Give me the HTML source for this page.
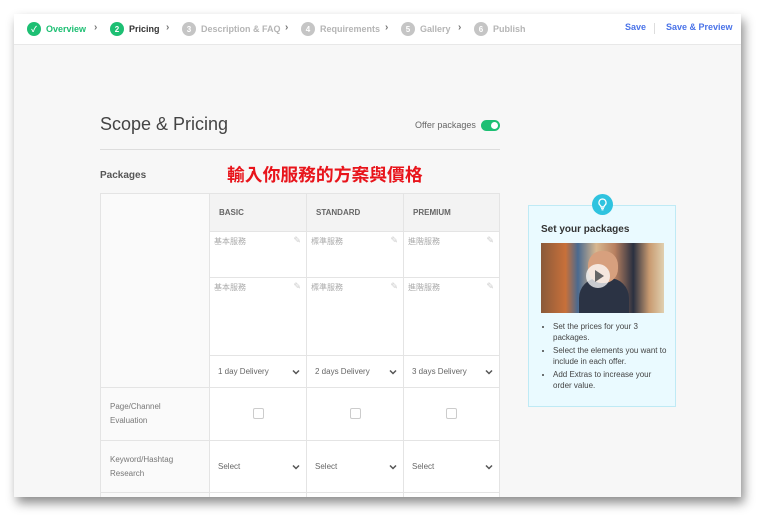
<!DOCTYPE html>
<html><head><meta charset="utf-8"><style>
*{box-sizing:border-box;margin:0;padding:0}
body{width:768px;height:525px;background:#fff;font-family:"Liberation Sans","Noto Sans CJK TC",sans-serif;position:relative;overflow:hidden}
.frame{position:absolute;left:14px;top:14px;width:727px;height:483px;background:#f7f7f7;box-shadow:3px 6px 10px rgba(0,0,0,.45);overflow:hidden}
.hdr{position:absolute;left:0;top:0;width:100%;height:31px;background:#fff;border-bottom:1px solid #e8e8e8;font-size:9px;font-weight:bold}
.st{position:absolute;top:8px;display:flex;align-items:center;color:#b5b5b5}
.c{width:14px;height:14px;border-radius:50%;background:#c5c5c5;color:#fff;font-size:8px;display:flex;align-items:center;justify-content:center;margin-right:5px}
.ar{position:absolute;top:8px;color:#777;font-size:10px}
.abs{position:absolute}
table{position:absolute;left:86px;top:179px;border-collapse:collapse;background:#fff}
td{border:1px solid #e4e4e4;vertical-align:top;font-size:8px;color:#888}
.lab{background:#fafafa;width:109px;color:#777;vertical-align:middle;padding-left:9px;line-height:14px}
.h{background:#f3f3f3;font-weight:bold;color:#666;vertical-align:middle;padding-left:9px}
.e{padding:4px;position:relative;color:#aaa;font-size:8px}
.e:after{content:"✎";position:absolute;right:5px;top:3px;color:#ccc;font-size:9px}
.sel{vertical-align:middle;padding:0 8px;color:#666;position:relative}
.sel svg{position:absolute;right:6px;top:calc(50% - 3px)}
.cb{vertical-align:middle;text-align:center}
.cb span{display:inline-block;width:11px;height:11px;border:1px solid #ccc;border-radius:2px}
</style></head><body>
<div class="frame">
<div class="hdr">
<div class="st" style="left:13px;color:#1dbf73"><div class="c" style="background:#1dbf73">✓</div>Overview</div>
<div class="ar" style="left:80px">›</div>
<div class="st" style="left:96px;color:#333"><div class="c" style="background:#1dbf73">2</div>Pricing</div>
<div class="ar" style="left:152px">›</div>
<div class="st" style="left:168px"><div class="c">3</div>Description &amp; FAQ</div>
<div class="ar" style="left:271px">›</div>
<div class="st" style="left:287px"><div class="c">4</div>Requirements</div>
<div class="ar" style="left:371px">›</div>
<div class="st" style="left:387px"><div class="c">5</div>Gallery</div>
<div class="ar" style="left:444px">›</div>
<div class="st" style="left:460px"><div class="c">6</div>Publish</div>
<div class="st" style="left:611px;color:#4a73e8">Save</div>
<div class="abs" style="left:640px;top:9px;width:1px;height:11px;background:#ddd"></div>
<div class="st" style="left:652px;color:#4a73e8">Save &amp; Preview</div>
</div>
<div class="abs" style="left:86px;top:100px;font-size:18px;color:#444">Scope &amp; Pricing</div>
<div class="abs" style="left:401px;top:106px;font-size:9px;color:#666">Offer packages</div>
<div class="abs" style="left:467px;top:106px;width:19px;height:11px;border-radius:6px;background:#1dbf73"><div style="position:absolute;right:2px;top:2px;width:7px;height:7px;border-radius:50%;background:#fff"></div></div>
<div class="abs" style="left:86px;top:135px;width:400px;height:1px;background:#ddd"></div>
<div class="abs" style="left:86px;top:156px;font-size:10px;font-weight:bold;color:#555">Packages</div>
<div class="abs" style="left:213px;top:147px;font-size:17.8px;font-weight:bold;color:#e8141b;white-space:nowrap">輸入你服務的方案與價格</div>
<table>
<tr style="height:38px"><td class="lab" rowspan="4"></td><td class="h" style="width:97px">BASIC</td><td class="h" style="width:97px">STANDARD</td><td class="h" style="width:96px">PREMIUM</td></tr>
<tr style="height:46px"><td class="e">基本服務</td><td class="e">標準服務</td><td class="e">進階服務</td></tr>
<tr style="height:78px"><td class="e">基本服務</td><td class="e">標準服務</td><td class="e">進階服務</td></tr>
<tr style="height:32px"><td class="sel">1 day Delivery<svg width="8" height="6" viewBox="0 0 8 6"><path d="M1 1.5L4 4.5L7 1.5" stroke="#555" stroke-width="1.5" fill="none"/></svg></td><td class="sel">2 days Delivery<svg width="8" height="6" viewBox="0 0 8 6"><path d="M1 1.5L4 4.5L7 1.5" stroke="#555" stroke-width="1.5" fill="none"/></svg></td><td class="sel">3 days Delivery<svg width="8" height="6" viewBox="0 0 8 6"><path d="M1 1.5L4 4.5L7 1.5" stroke="#555" stroke-width="1.5" fill="none"/></svg></td></tr>
<tr style="height:53px"><td class="lab">Page/Channel<br>Evaluation</td><td class="cb"><span></span></td><td class="cb"><span></span></td><td class="cb"><span></span></td></tr>
<tr style="height:52px"><td class="lab">Keyword/Hashtag<br>Research</td><td class="sel">Select<svg width="8" height="6" viewBox="0 0 8 6"><path d="M1 1.5L4 4.5L7 1.5" stroke="#555" stroke-width="1.5" fill="none"/></svg></td><td class="sel">Select<svg width="8" height="6" viewBox="0 0 8 6"><path d="M1 1.5L4 4.5L7 1.5" stroke="#555" stroke-width="1.5" fill="none"/></svg></td><td class="sel">Select<svg width="8" height="6" viewBox="0 0 8 6"><path d="M1 1.5L4 4.5L7 1.5" stroke="#555" stroke-width="1.5" fill="none"/></svg></td></tr>
<tr style="height:20px"><td class="lab"></td><td></td><td></td><td></td></tr>
</table>
<div class="abs" style="left:514px;top:191px;width:148px;height:202px;background:#eafaff;border:1px solid #bfeaf5">
<div style="position:absolute;left:12px;top:18px;font-size:10px;font-weight:bold;color:#333">Set your packages</div>
<div style="position:absolute;left:12px;top:37px;width:123px;height:70px;background:linear-gradient(90deg,#8a5a3a 0%,#c8703a 20%,#4a6a90 30%,#d8b890 45%,#b88060 60%,#2a3040 75%,#c89a70 88%,#e0d0b0 100%)">
<div style="position:absolute;left:38px;top:35px;width:50px;height:35px;background:#2b3344;border-radius:20px 20px 0 0"></div>
<div style="position:absolute;left:47px;top:8px;width:30px;height:32px;background:#d7a07e;border-radius:45%"></div>
<div style="position:absolute;left:45px;top:21px;width:24px;height:24px;border-radius:50%;background:rgba(255,255,255,.75)"><div style="position:absolute;left:9px;top:6px;border-left:9px solid #666;border-top:6px solid transparent;border-bottom:6px solid transparent"></div></div>
</div>
<ul style="position:absolute;left:24px;top:116px;width:114px;font-size:8px;color:#444;line-height:10.5px">
<li style="margin-bottom:3px">Set the prices for your 3 packages.</li>
<li style="margin-bottom:3px">Select the elements you want to include in each offer.</li>
<li>Add Extras to increase your order value.</li>
</ul>
</div>
<div class="abs" style="left:578px;top:180px;width:21px;height:21px;border-radius:50%;background:#2fc3df">
<svg width="21" height="21" viewBox="0 0 21 21"><path d="M10.5 5a3.6 3.6 0 0 0-2.2 6.4c.5.4.7.9.7 1.5h3c0-.6.2-1.1.7-1.5A3.6 3.6 0 0 0 10.5 5z" fill="none" stroke="#fff" stroke-width="1.3"/><path d="M9 14.3h3M9.5 15.8h2" stroke="#fff" stroke-width="1.2"/></svg>
</div>
</div>
</body></html>
